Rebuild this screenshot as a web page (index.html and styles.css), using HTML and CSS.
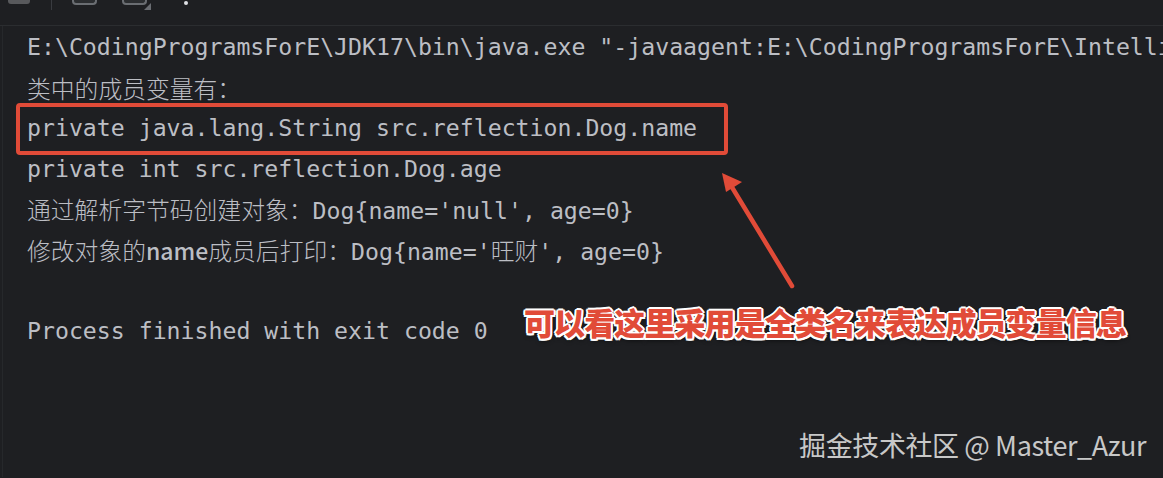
FILE: index.html
```html
<!DOCTYPE html>
<html lang="zh-CN">
<head>
<meta charset="utf-8">
<title>Console</title>
<link rel="stylesheet" href="styles.css">
</head>
<body>
<div class="window">
  <div class="toolbar">
    <div class="tb-square"></div>
    <div class="tb-sep"></div>
    <div class="tb-icon"></div>
    <div class="tb-icon tb-icon2"><span class="tb-corner"></span></div>
    <div class="tb-dot"></div>
  </div>
  <div class="console">
    <div class="line">E:\CodingProgramsForE\JDK17\bin\java.exe "-javaagent:E:\CodingProgramsForE\IntelliJ</div>
    <div class="line"><span class="cjk">类中的成员变量有：</span></div>
    <div class="line"><span class="boxed">private java.lang.String src.reflection.Dog.name</span></div>
    <div class="line">private int src.reflection.Dog.age</div>
    <div class="line"><span class="cjk">通过解析字节码创建对象：</span>Dog{name='null', age=0}</div>
    <div class="line"><span class="cjk">修改对象的<span class="sans">name</span>成员后打印：</span>Dog{name='<span class="cjk">旺财</span>', age=0}</div>
    <div class="line"></div>
    <div class="line">Process finished with exit code 0</div>
  </div>
  <svg class="arrow" width="100" height="130" viewBox="0 0 100 130">
    <line x1="75" y1="116" x2="13" y2="14" stroke="#e14b38" stroke-width="4.5" stroke-linecap="round"/>
    <polygon points="5,3 25,12 9,22" fill="#e14b38"/>
  </svg>
  <div class="callout">可以看这里采用是全类名来表达成员变量信息</div>
  <div class="watermark">掘金技术社区 @ Master_Azur</div>
</div>
</body>
</html>
```
FILE: styles.css
```css
html, body {
  margin: 0;
  padding: 0;
  background: #1e1f22;
}

.window {
  position: relative;
  width: 1163px;
  height: 478px;
  overflow: hidden;
  background: #1e1f22;
}

.toolbar {
  height: 25px;
  border-bottom: 1px solid #2b2d30;
  display: flex;
  align-items: flex-start;
}

.tb-square {
  width: 22px;
  height: 4px;
  margin-left: 8px;
  background: #58595c;
  border-radius: 0 0 3px 3px;
}

.tb-sep {
  width: 1px;
  height: 10px;
  margin-left: 21px;
  background: #393b40;
}

.tb-icon {
  width: 21px;
  height: 3px;
  margin-left: 20px;
  border: 2px solid #6a6d72;
  border-top: none;
  border-radius: 0 0 4px 4px;
  background: #2b2d30;
}

.tb-icon2 {
  position: relative;
  margin-left: 25px;
}

.tb-corner {
  position: absolute;
  right: -6px;
  top: 3px;
  width: 0;
  height: 0;
  border-left: 7px solid transparent;
  border-bottom: 7px solid #6a6d72;
}

.tb-dot {
  width: 4px;
  height: 4px;
  margin-left: 37px;
  margin-top: 1px;
  border-radius: 50%;
  background: #dfe1e5;
}

.console {
  margin-left: 2px;
  border-left: 1px solid #26282b;
  padding: 1px 0 0 24px;
  height: 450px;
  overflow: hidden;
  font-family: "DejaVu Sans Mono", "Liberation Mono", "Noto Sans CJK SC", monospace;
  font-size: 23.2px;
  line-height: 40.6px;
  color: #bcbec4;
}

.line {
  height: 40.6px;
  white-space: pre;
}

.cjk {
  font-family: "Noto Sans CJK SC", sans-serif;
  font-size: 23.8px;
  font-weight: 300;
}

.sans {
  font-family: "Noto Sans CJK SC", sans-serif;
  font-weight: 500;
  font-size: 23px;
}

.boxed {
  position: relative;
  display: inline-block;
}

.boxed::after {
  content: "";
  position: absolute;
  left: -11px;
  right: -31px;
  top: -5px;
  bottom: -6px;
  border: 4px solid #e14b38;
  border-radius: 4px;
}

.arrow {
  position: absolute;
  left: 717px;
  top: 170px;
}

.callout {
  position: absolute;
  left: 524px;
  top: 300px;
  font-family: "Noto Sans CJK SC", sans-serif;
  font-weight: 900;
  font-size: 31px;
  letter-spacing: -0.9px;
  line-height: 44px;
  color: #e14b38;
  text-shadow:
    2px 0 0 #fff, -2px 0 0 #fff, 0 2px 0 #fff, 0 -2px 0 #fff,
    1.5px 1.5px 0 #fff, -1.5px -1.5px 0 #fff, 1.5px -1.5px 0 #fff, -1.5px 1.5px 0 #fff,
    0 3px 4px rgba(0, 0, 0, 0.5);
}

.watermark {
  position: absolute;
  right: 17px;
  top: 426px;
  font-family: "Noto Sans CJK SC", sans-serif;
  font-size: 27px;
  line-height: 38px;
  color: #c8c8c8;
  letter-spacing: -0.4px;
}
```
